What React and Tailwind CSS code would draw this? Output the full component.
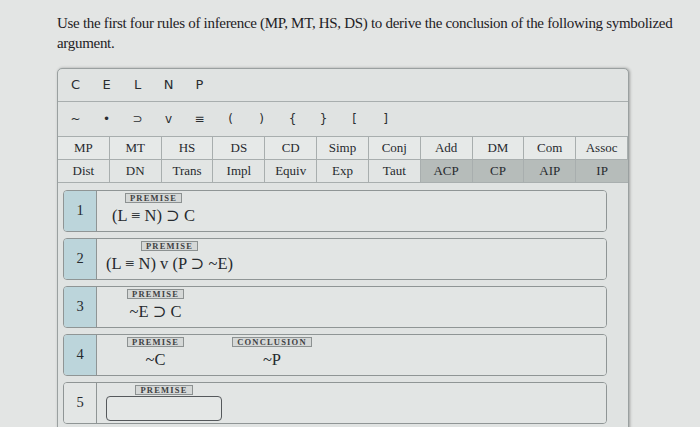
import React from "react";

const serif = { fontFamily: '"Liberation Serif", "DejaVu Serif", serif' };

function Tag({ children }) {
  return (
    <div className="h-[10px] px-[4px] border border-[#8c9191] bg-[#d5d8d7] text-[8.5px] leading-[8px] font-bold tracking-[1.2px] text-[#3e4143] flex items-center">
      {children}
    </div>
  );
}

function Group({ tag, children, className = "" }) {
  return (
    <div className={"flex flex-col items-center " + className}>
      <Tag>{tag}</Tag>
      <div className="mt-[2px] h-[22px] leading-[22px] text-[16.5px] text-[#262a2e] whitespace-nowrap">{children}</div>
    </div>
  );
}

function Row({ n, blue = true, children, className = "" }) {
  return (
    <div className={"flex h-[42px] border border-[#8f9595] rounded-[4px] overflow-hidden " + className}>
      <div className={"w-[33px] shrink-0 border-r border-[#8f9595] flex items-center justify-center text-[14.5px] text-[#262a2e] " + (blue ? "bg-[#bcd5db]" : "bg-[#e3e6e5]")}>
        {n}
      </div>
      <div className="flex-1 flex items-start pt-[2px] bg-[#e2e5e4]">{children}</div>
    </div>
  );
}

export default function App() {
  const row1 = ["MP", "MT", "HS", "DS", "CD", "Simp", "Conj", "Add", "DM", "Com", "Assoc"];
  const row2 = ["Dist", "DN", "Trans", "Impl", "Equiv", "Exp", "Taut", "ACP", "CP", "AIP", "IP"];
  const letters = ["C", "E", "L", "N", "P"];
  const syms = ["~", "•", "⊃", "v", "≡", "(", ")", "{", "}", "[", "]"];
  return (
    <div className="w-[700px] h-[427px] overflow-hidden bg-[#e3e5e4]" style={serif}>
      <div className="pl-[57px] pt-[13px] w-[690px] text-[15px] leading-[20px] text-[#1e2124] tracking-[-0.3px]">
        Use the first four rules of inference (MP, MT, HS, DS) to derive the conclusion of the following symbolized argument.
      </div>
      <div className="ml-[57px] mt-[15px] w-[572px] h-[400px] border border-[#9aa0a0] rounded-t-[5px] bg-[#e0e3e2] shadow-[1px_0_3px_rgba(0,0,0,0.3)]">
        <div className="h-[33px] flex items-center pl-[2px] border-b border-[#a8aeae] text-[13px] text-[#2a2d30]" style={{ fontFamily: '"DejaVu Sans", sans-serif' }}>
          {letters.map((l) => (
            <div key={l} className="w-[31px] text-center">{l}</div>
          ))}
        </div>
        <div className="h-[35px] flex items-center pl-[2px] border-b border-[#a8aeae] text-[12px] text-[#2a2d30]" style={{ fontFamily: '"DejaVu Sans", sans-serif' }}>
          {syms.map((s, i) => (
            <div key={i} className="w-[31px] text-center">{s}</div>
          ))}
        </div>
        <div className="grid grid-cols-11 text-[13px] text-[#262a2e]">
          {row1.map((r) => (
            <div key={r} className="h-[23px] flex items-center justify-center border-r border-b border-[#a8aeae] bg-[#e6e9e8] last:border-r-0">{r}</div>
          ))}
          {row2.map((r, i) => (
            <div key={r} className={"h-[23px] flex items-center justify-center border-r border-b border-[#a8aeae] last:border-r-0 " + (i >= 7 ? "bg-[#b6bcba]" : "bg-[#e2e5e4]")}>{r}</div>
          ))}
        </div>
        <div className="pl-[5px] pr-[21px] pt-[7px] flex flex-col gap-[6px]">
          <Row n="1">
            <Group tag="PREMISE" className="ml-[15px]">(L ≡ N) ⊃ C</Group>
          </Row>
          <Row n="2">
            <Group tag="PREMISE" className="ml-[9px]">(L ≡ N) v (P ⊃ ~E)</Group>
          </Row>
          <Row n="3">
            <Group tag="PREMISE" className="ml-[30px]">~E ⊃ C</Group>
          </Row>
          <Row n="4">
            <Group tag="PREMISE" className="ml-[30px]">~C</Group>
            <Group tag="CONCLUSION" className="ml-[48px]">~P</Group>
          </Row>
          <Row n="5" blue={false}>
            <div className="ml-[9px] flex flex-col items-center">
              <Tag>PREMISE</Tag>
              <div className="mt-[1px] w-[116px] h-[25px] border border-[#55595c] rounded-[4px] bg-[#e4e7e6]"></div>
            </div>
          </Row>
        </div>
      </div>
    </div>
  );
}
